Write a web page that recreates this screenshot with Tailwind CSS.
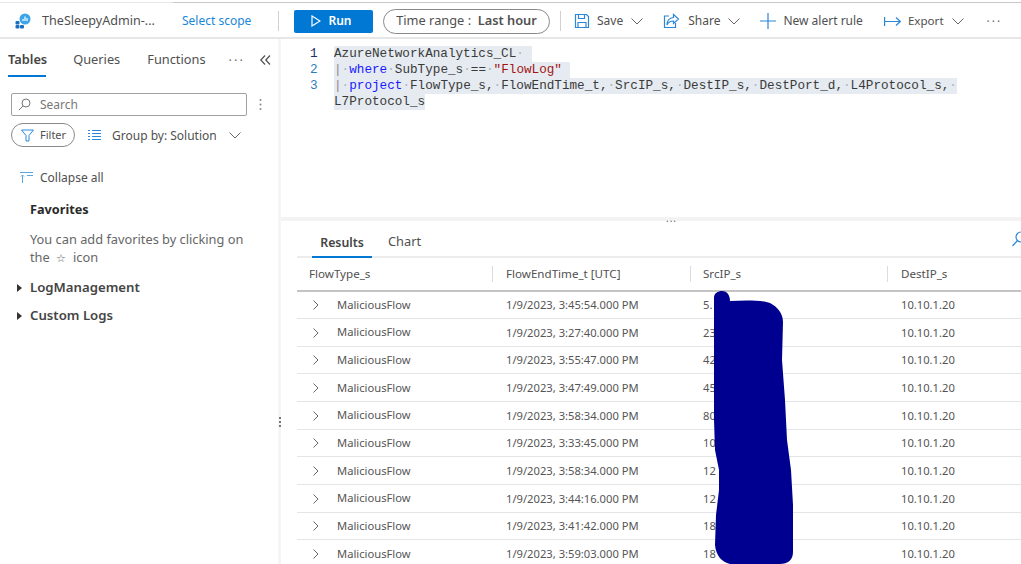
<!DOCTYPE html>
<html lang="en">
<head>
    <meta charset="UTF-8">
    <title>Logs</title>
    <script src="https://cdn.jsdelivr.net/npm/@tailwindcss/browser@4"></script>
</head>
<body class="bg-white">
<div class="relative w-[1021px] h-[564px] overflow-hidden flex flex-col font-['Noto_Sans',sans-serif] text-[12px] text-[#505050]">

    <!-- strip of the window above -->
    <div class="h-[3px] flex shrink-0">
        <div class="w-[173px] border-b border-[#e8e8e8]"></div>
        <div class="flex-1 border-b border-[#c8c8c8]"></div>
    </div>

    <!-- toolbar -->
    <div class="h-[36px] pt-[2px] shrink-0 flex items-center border-b-2 border-[#e6e6e6] whitespace-nowrap">
        <svg class="ml-[15px] w-[16px] h-[16px]" viewBox="0 0 16 16">
            <circle cx="10" cy="6" r="5.5" fill="#3ba5e8"/>
            <rect x="0.5" y="8" width="4" height="3.5" rx="1" fill="#1b6fc2"/>
            <rect x="0.5" y="12" width="4" height="3.5" rx="1" fill="#1b6fc2"/>
            <rect x="5" y="12" width="4" height="3.5" rx="1" fill="#1b6fc2"/>
            <path d="M8 8V6M10 8V3.5M12 8V5" stroke="#fff" stroke-width="1.2"/>
        </svg>
        <span class="ml-[11px] w-[140px] text-[12.6px]">TheSleepyAdmin-...</span>
        <span class="text-[#1a86d8] text-[12px] w-[96px]">Select scope</span>
        <div class="w-px h-[20px] bg-[#d0d0d0]"></div>
        <button class="ml-[15px] w-[79px] h-[23px] bg-[#0078d4] rounded-[2px] flex items-center justify-center gap-[7px] pr-[4px] text-white font-semibold">
            <svg class="w-[10px] h-[12px]" viewBox="0 0 10 12" fill="none" stroke="#fff" stroke-width="1.2"><path d="M1 1l8 5-8 5z"/></svg>
            Run
        </button>
        <div class="ml-[10px] w-[167px] h-[25px] border border-[#8a8a8a] rounded-full flex items-center justify-center text-[12.8px]">
            Time range :&nbsp;&nbsp;<span class="font-semibold">Last hour</span>
        </div>
        <div class="ml-[10px] w-px h-[20px] bg-[#d0d0d0]"></div>
        <svg class="ml-[13px] w-[16px] h-[16px]" viewBox="0 0 16 16" fill="none" stroke="#2b88d8" stroke-width="1.2">
            <path d="M1.5 1.5h11l2 2v11h-13z"/><path d="M4.5 1.5v4h6v-4M4 14.5v-5h8v5"/>
        </svg>
        <span class="ml-[7px]">Save</span>
        <svg class="ml-[8px] w-[12px] h-[7px]" viewBox="0 0 12 7" fill="none" stroke="#666"><path d="M.5.5l5.500 5.500 5.500-5.500"/></svg>
        <svg class="ml-[20px] w-[17px] h-[16px]" viewBox="0 0 17 16" fill="none" stroke="#2b88d8" stroke-width="1.2">
            <path d="M6 3H1.500v11.500h11V10"/><path d="M10.500 1.500l5 4.500-5 4.500V8C7 8 5 9.500 4 12c0-4 2.500-7 6.500-7.500z"/>
        </svg>
        <span class="ml-[8px]">Share</span>
        <svg class="ml-[8px] w-[12px] h-[7px]" viewBox="0 0 12 7" fill="none" stroke="#666"><path d="M.5.5l5.500 5.500 5.500-5.500"/></svg>
        <svg class="ml-[20px] w-[16px] h-[16px]" viewBox="0 0 17 17" fill="none" stroke="#2b88d8" stroke-width="1.300"><path d="M8.500 0v17M0 8.500h17"/></svg>
        <span class="ml-[7px]">New alert rule</span>
        <svg class="ml-[21px] w-[17px] h-[11px]" viewBox="0 0 17 11" fill="none" stroke="#2b88d8" stroke-width="1.200"><path d="M.6 1v9M1 5.500h15M12 1.500l4.300 4-4.300 4"/></svg>
        <span class="ml-[7px] text-[11.6px]">Export</span>
        <svg class="ml-[8px] w-[12px] h-[7px]" viewBox="0 0 12 7" fill="none" stroke="#666"><path d="M.5.5l5.500 5.500 5.500-5.500"/></svg>
        <span class="ml-[23px] tracking-[2px] text-[#707070] leading-none -mt-[6px]">...</span>
    </div>

    <div class="flex-1 flex min-h-0">
        <!-- left panel -->
        <aside class="w-[278px] shrink-0 relative">
            <div class="flex items-center h-[36px] mt-[2px] pt-[2px] relative text-[12.8px]">
                <span class="ml-[8px] font-semibold text-[#444]">Tables</span>
                <span class="ml-[26px]">Queries</span>
                <span class="ml-[27px]">Functions</span>
                <span class="ml-[23px] tracking-[2px] text-[#707070] -mt-[6px]">...</span>
                <svg class="ml-[15px] w-[11px] h-[10px]" viewBox="0 0 11 10" fill="none" stroke="#555" stroke-width="1.300"><path d="M5 .5L.8 5 5 9.500M10 .5L5.800 5 10 9.500"/></svg>
                <div class="absolute left-[8px] bottom-0 w-[38px] h-[2px] bg-[#0078d4]"></div>
            </div>
            <div class="flex items-center mt-[16px]">
                <div class="ml-[11px] w-[236px] h-[23px] border border-[#a0a0a0] rounded-[2px] flex items-center">
                    <svg class="ml-[6px] w-[13px] h-[13px]" viewBox="0 0 13 13" fill="none" stroke="#777"><circle cx="8" cy="5" r="4"/><path d="M5 8l-4 4"/></svg>
                    <span class="ml-[9px] pt-[1px] text-[#777]">Search</span>
                </div>
                <svg class="ml-[12px] w-[3px] h-[13px]" viewBox="0 0 3 13" fill="#888"><circle cx="1.500" cy="2" r="1"/><circle cx="1.500" cy="6.500" r="1"/><circle cx="1.500" cy="11" r="1"/></svg>
            </div>
            <div class="flex items-center mt-[7px]">
                <div class="ml-[11px] w-[64px] h-[24px] border border-[#8a8a8a] rounded-full flex items-center">
                    <svg class="ml-[9px] w-[13px] h-[13px]" viewBox="0 0 13 13" fill="none" stroke="#2b88d8"><path d="M.5 1h12L8 6.500V12H5V6.500z"/></svg>
                    <span class="ml-[6px] pt-[1px] text-[11px]">Filter</span>
                </div>
                <svg class="ml-[13px] w-[13px] h-[12px]" viewBox="0 0 13 12" fill="none" stroke="#2b88d8"><path d="M0 1.500h2M4 1.500h9M0 4.500h2M4 4.500h9M0 7.500h2M4 7.500h9M0 10.500h2M4 10.500h9"/></svg>
                <span class="ml-[11px] pt-[1px]">Group by: Solution</span>
                <svg class="ml-[12px] w-[12px] h-[7px]" viewBox="0 0 12 7" fill="none" stroke="#666"><path d="M.5.5l5.500 5.500 5.500-5.500"/></svg>
            </div>
            <div class="flex items-center mt-[22px]">
                <svg class="ml-[20px] w-[13px] h-[12px]" viewBox="0 0 13 12" fill="none" stroke="#5ba7e0"><path d="M0 .5h13M7 3.500h6M2.500 3v8M1 4.500l1.500-1.500 1.500 1.500"/></svg>
                <span class="ml-[7px]">Collapse all</span>
            </div>
            <div class="ml-[30px] mt-[13px] font-bold text-[12.7px] text-[#2a2a2a]">Favorites</div>
            <div class="ml-[30px] mt-[11px] w-[240px] leading-[18px] text-[12.8px] text-[#666] whitespace-nowrap">You can add favorites by clicking on<br>the&nbsp; <span class="text-[11px]">☆</span>&nbsp; icon</div>
            <div class="flex items-center mt-[12px] h-[18px] font-semibold text-[13.2px] text-[#444]">
                <span class="ml-[17px] w-[13px]"><svg class="w-[5px] h-[8px]" viewBox="0 0 5 8" fill="#333"><path d="M0 0l5 4-5 4z"/></svg></span>LogManagement
            </div>
            <div class="flex items-center mt-[10px] h-[18px] font-semibold text-[13.2px] text-[#444]">
                <span class="ml-[17px] w-[13px]"><svg class="w-[5px] h-[8px]" viewBox="0 0 5 8" fill="#333"><path d="M0 0l5 4-5 4z"/></svg></span>Custom Logs
            </div>
        </aside>

        <!-- drag handle between panels -->
        <div class="w-[3px] shrink-0 bg-[#f5f5f5] flex flex-col justify-center items-center gap-[2px] pt-[240px]">
            <i class="w-[2px] h-[2px] bg-[#777]"></i><i class="w-[2px] h-[2px] bg-[#777]"></i><i class="w-[2px] h-[2px] bg-[#777]"></i>
        </div>

        <main class="flex-1 min-w-0 flex flex-col">
            <!-- query editor -->
            <div class="h-[178px] shrink-0 flex pt-[7px] font-['Liberation_Mono',monospace] text-[12.67px] leading-[16px] text-[#3a3a3a]">
                <div class="w-[53px] pl-[29px] text-[#2b7db8]"><div class="text-[#222a70]">1</div><div>2</div><div>3</div></div>
                <div>
                    <div class="whitespace-pre"><span class="inline-block h-[16px] bg-[#e5ebf1]">AzureNetworkAnalytics_CL<span class="text-[#aab4c0]">·</span> </span></div>
                    <div class="whitespace-pre"><span class="inline-block h-[16px] bg-[#e5ebf1]"><span class="text-[#8a8a8a]">|</span><span class="text-[#aab4c0]">·</span><span class="text-[#1a1aff]">where</span><span class="text-[#aab4c0]">·</span>SubType_s<span class="text-[#aab4c0]">·</span>==<span class="text-[#aab4c0]">·</span><span class="text-[#a31515]">"FlowLog"</span> </span></div>
                    <div class="whitespace-pre"><span class="inline-block h-[16px] bg-[#e5ebf1]"><span class="text-[#8a8a8a]">|</span><span class="text-[#aab4c0]">·</span><span class="text-[#1a1aff]">project</span><span class="text-[#aab4c0]">·</span>FlowType_s,<span class="text-[#aab4c0]">·</span>FlowEndTime_t,<span class="text-[#aab4c0]">·</span>SrcIP_s,<span class="text-[#aab4c0]">·</span>DestIP_s,<span class="text-[#aab4c0]">·</span>DestPort_d,<span class="text-[#aab4c0]">·</span>L4Protocol_s,<span class="text-[#aab4c0]">·</span></span></div>
                    <div class="whitespace-pre"><span class="inline-block h-[16px] bg-[#e5ebf1]">L7Protocol_s</span></div>
                </div>
            </div>

            <!-- splitter -->
            <div class="h-[4px] shrink-0 bg-[#f3f3f3] flex justify-center">
                <span class="tracking-[1px] text-[10px] leading-[2px] text-[#666] ml-[41px]">...</span>
            </div>

            <!-- results -->
            <div class="flex-1 min-h-0 pl-[16px]">
                <div class="relative h-[37px] flex items-end border-b-2 border-[#ececec]">
                    <div class="ml-[15px] w-[60px] h-[27px] text-center border-b-2 border-[#0078d4] -mb-[2px] font-semibold text-[12.3px] text-[#444] leading-[24px]">Results</div>
                    <div class="ml-[16px] h-[27px] leading-[24px] text-[12.8px]">Chart</div>
                    <svg class="absolute right-0 top-[10px] w-[9px] h-[17px]" viewBox="0 0 9 17" fill="none" stroke="#2b88d8" stroke-width="1.200"><circle cx="9" cy="6" r="5"/><path d="M5.500 9.500L.5 15"/></svg>
                </div>
                <table class="w-[743px] table-fixed border-collapse">
                    <thead class="text-[11.6px]">
                        <tr class="h-[33px] border-b-2 border-[#c4c4c4] text-left font-normal">
                            <th class="w-[196px] pl-[12px] font-normal"><div class="border-r border-[#dcdcdc] leading-[16px]">FlowType_s</div></th>
                            <th class="w-[198px] pl-[13px] font-normal"><div class="border-r border-[#dcdcdc] leading-[16px]">FlowEndTime_t [UTC]</div></th>
                            <th class="w-[197px] pl-[12px] font-normal"><div class="border-r border-[#dcdcdc] leading-[16px]">SrcIP_s</div></th>
                            <th class="pl-[13px] font-normal">DestIP_s</th>
                        </tr>
                    </thead>
                    <tbody class="text-[#555] text-[11.2px]">
                        <tr class="h-[27.67px] border-b border-[#e3e6e8]"><td class="pl-[16px] pt-[2px]"><span class="inline-flex items-center"><svg class="w-[6px] h-[10px] mr-[18px]" viewBox="0 0 6 10" fill="none" stroke="#666"><path d="M.5.5l4.500 4.500-4.500 4.500"/></svg>MaliciousFlow</span></td><td class="pl-[13px] pt-[1px]">1/9/2023, 3:45:54.000 PM</td><td class="pl-[12px] pt-[1px]">5.</td><td class="pl-[13px] pt-[1px]">10.10.1.20</td></tr>
                        <tr class="h-[27.67px] border-b border-[#e3e6e8]"><td class="pl-[16px] pt-[2px]"><span class="inline-flex items-center"><svg class="w-[6px] h-[10px] mr-[18px]" viewBox="0 0 6 10" fill="none" stroke="#666"><path d="M.5.5l4.500 4.500-4.500 4.500"/></svg>MaliciousFlow</span></td><td class="pl-[13px] pt-[1px]">1/9/2023, 3:27:40.000 PM</td><td class="pl-[12px] pt-[1px]">23</td><td class="pl-[13px] pt-[1px]">10.10.1.20</td></tr>
                        <tr class="h-[27.67px] border-b border-[#e3e6e8]"><td class="pl-[16px] pt-[2px]"><span class="inline-flex items-center"><svg class="w-[6px] h-[10px] mr-[18px]" viewBox="0 0 6 10" fill="none" stroke="#666"><path d="M.5.5l4.500 4.500-4.500 4.500"/></svg>MaliciousFlow</span></td><td class="pl-[13px] pt-[1px]">1/9/2023, 3:55:47.000 PM</td><td class="pl-[12px] pt-[1px]">42</td><td class="pl-[13px] pt-[1px]">10.10.1.20</td></tr>
                        <tr class="h-[27.67px] border-b border-[#e3e6e8]"><td class="pl-[16px] pt-[2px]"><span class="inline-flex items-center"><svg class="w-[6px] h-[10px] mr-[18px]" viewBox="0 0 6 10" fill="none" stroke="#666"><path d="M.5.5l4.500 4.500-4.500 4.500"/></svg>MaliciousFlow</span></td><td class="pl-[13px] pt-[1px]">1/9/2023, 3:47:49.000 PM</td><td class="pl-[12px] pt-[1px]">45</td><td class="pl-[13px] pt-[1px]">10.10.1.20</td></tr>
                        <tr class="h-[27.67px] border-b border-[#e3e6e8]"><td class="pl-[16px] pt-[2px]"><span class="inline-flex items-center"><svg class="w-[6px] h-[10px] mr-[18px]" viewBox="0 0 6 10" fill="none" stroke="#666"><path d="M.5.5l4.500 4.500-4.500 4.500"/></svg>MaliciousFlow</span></td><td class="pl-[13px] pt-[1px]">1/9/2023, 3:58:34.000 PM</td><td class="pl-[12px] pt-[1px]">80</td><td class="pl-[13px] pt-[1px]">10.10.1.20</td></tr>
                        <tr class="h-[27.67px] border-b border-[#e3e6e8]"><td class="pl-[16px] pt-[2px]"><span class="inline-flex items-center"><svg class="w-[6px] h-[10px] mr-[18px]" viewBox="0 0 6 10" fill="none" stroke="#666"><path d="M.5.5l4.500 4.500-4.500 4.500"/></svg>MaliciousFlow</span></td><td class="pl-[13px] pt-[1px]">1/9/2023, 3:33:45.000 PM</td><td class="pl-[12px] pt-[1px]">10</td><td class="pl-[13px] pt-[1px]">10.10.1.20</td></tr>
                        <tr class="h-[27.67px] border-b border-[#e3e6e8]"><td class="pl-[16px] pt-[2px]"><span class="inline-flex items-center"><svg class="w-[6px] h-[10px] mr-[18px]" viewBox="0 0 6 10" fill="none" stroke="#666"><path d="M.5.5l4.500 4.500-4.500 4.500"/></svg>MaliciousFlow</span></td><td class="pl-[13px] pt-[1px]">1/9/2023, 3:58:34.000 PM</td><td class="pl-[12px] pt-[1px]">12</td><td class="pl-[13px] pt-[1px]">10.10.1.20</td></tr>
                        <tr class="h-[27.67px] border-b border-[#e3e6e8]"><td class="pl-[16px] pt-[2px]"><span class="inline-flex items-center"><svg class="w-[6px] h-[10px] mr-[18px]" viewBox="0 0 6 10" fill="none" stroke="#666"><path d="M.5.5l4.500 4.500-4.500 4.500"/></svg>MaliciousFlow</span></td><td class="pl-[13px] pt-[1px]">1/9/2023, 3:44:16.000 PM</td><td class="pl-[12px] pt-[1px]">12</td><td class="pl-[13px] pt-[1px]">10.10.1.20</td></tr>
                        <tr class="h-[27.67px] border-b border-[#e3e6e8]"><td class="pl-[16px] pt-[2px]"><span class="inline-flex items-center"><svg class="w-[6px] h-[10px] mr-[18px]" viewBox="0 0 6 10" fill="none" stroke="#666"><path d="M.5.5l4.500 4.500-4.500 4.500"/></svg>MaliciousFlow</span></td><td class="pl-[13px] pt-[1px]">1/9/2023, 3:41:42.000 PM</td><td class="pl-[12px] pt-[1px]">18</td><td class="pl-[13px] pt-[1px]">10.10.1.20</td></tr>
                        <tr class="h-[27.67px] border-b border-[#e3e6e8]"><td class="pl-[16px] pt-[2px]"><span class="inline-flex items-center"><svg class="w-[6px] h-[10px] mr-[18px]" viewBox="0 0 6 10" fill="none" stroke="#666"><path d="M.5.5l4.500 4.500-4.500 4.500"/></svg>MaliciousFlow</span></td><td class="pl-[13px] pt-[1px]">1/9/2023, 3:59:03.000 PM</td><td class="pl-[12px] pt-[1px]">18</td><td class="pl-[13px] pt-[1px]">10.10.1.20</td></tr>
                    </tbody>
                </table>
            </div>
        </main>
    </div>

    <!-- blue marker scribble over the source IPs -->
    <svg class="absolute left-0 top-0 w-[1021px] h-[564px] pointer-events-none" viewBox="0 0 1021 564">
        <path fill="#000090" d="M714 298C714 293 718 291 722 291C727 291 730 295 730 301C745 300 762 300 770 303C778 307 783 314 783 322L782 360L785 400L787 440L791 470L793 505V552C793 560 788 564 780 564H730C722 562 716 556 715 545L716 515L719 490V470L715 450L714 420Z"/>
    </svg>
</div>
</body>
</html>
